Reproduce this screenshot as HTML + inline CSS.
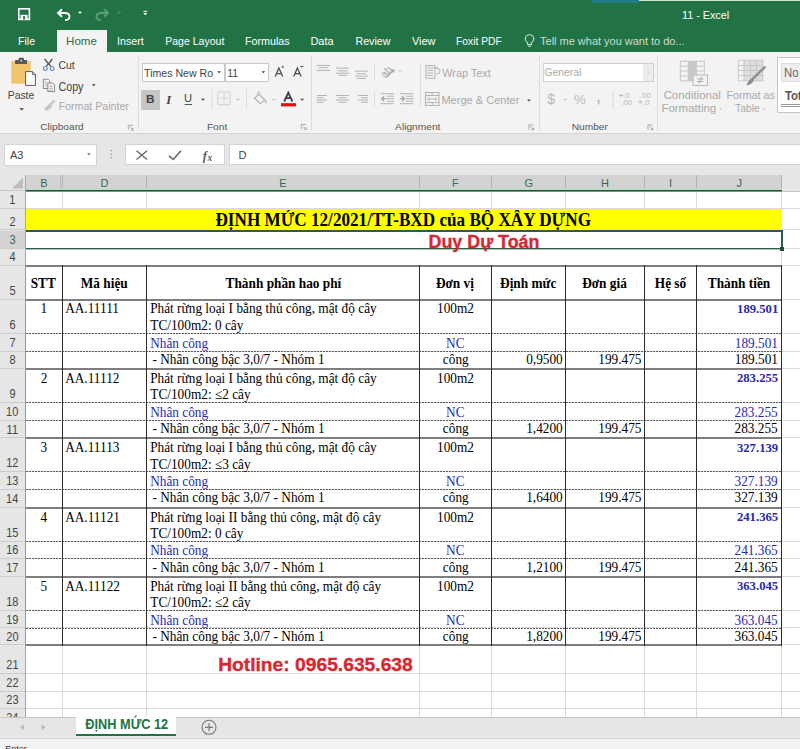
<!DOCTYPE html>
<html><head><meta charset="utf-8"><title>Excel</title>
<style>html,body{margin:0;padding:0;} body{width:800px;height:749px;overflow:hidden;position:relative;background:#fff;font-family:'Liberation Sans',sans-serif;}</style>
</head><body>
<div style="position:absolute;left:0px;top:0px;width:800px;height:52px;background:#217346"></div>
<div style="position:absolute;left:592px;top:0px;width:47px;height:3px;background:linear-gradient(#1f7a96,#2a7a70)"></div>
<div style="position:absolute;left:639px;top:0px;width:161px;height:1px;background:#cfe3d6"></div>
<div style="left:681.94px;position:absolute;top:10px;font-family:'Liberation Sans',sans-serif;font-size:10.8px;line-height:1;font-weight:400;color:#fff;white-space:pre;">11 - Excel</div>
<div style="position:absolute;left:57px;top:30px;width:50px;height:22px;background:#f3f3f3"></div>
<div style="left:18.05px;position:absolute;top:36px;font-family:'Liberation Sans',sans-serif;font-size:10.6px;line-height:1;font-weight:400;color:#fff;white-space:pre;">File</div>
<div style="left:66.07px;position:absolute;top:36px;font-family:'Liberation Sans',sans-serif;font-size:11.57px;line-height:1;font-weight:400;color:#35684b;white-space:pre;">Home</div>
<div style="left:117.04px;position:absolute;top:36px;font-family:'Liberation Sans',sans-serif;font-size:10.71px;line-height:1;font-weight:400;color:#fff;white-space:pre;">Insert</div>
<div style="left:165.26px;position:absolute;top:36px;font-family:'Liberation Sans',sans-serif;font-size:10.52px;line-height:1;font-weight:400;color:#fff;white-space:pre;">Page Layout</div>
<div style="left:245.04px;position:absolute;top:36px;font-family:'Liberation Sans',sans-serif;font-size:10.69px;line-height:1;font-weight:400;color:#fff;white-space:pre;">Formulas</div>
<div style="left:310.42px;position:absolute;top:36px;font-family:'Liberation Sans',sans-serif;font-size:10.98px;line-height:1;font-weight:400;color:#fff;white-space:pre;">Data</div>
<div style="left:355.45px;position:absolute;top:36px;font-family:'Liberation Sans',sans-serif;font-size:10.66px;line-height:1;font-weight:400;color:#fff;white-space:pre;">Review</div>
<div style="left:411.89px;position:absolute;top:36px;font-family:'Liberation Sans',sans-serif;font-size:10.93px;line-height:1;font-weight:400;color:#fff;white-space:pre;">View</div>
<div style="left:456.08px;position:absolute;top:37px;font-family:'Liberation Sans',sans-serif;font-size:10.28px;line-height:1;font-weight:400;color:#fff;white-space:pre;">Foxit PDF</div>
<div style="left:540.08px;position:absolute;top:36px;font-family:'Liberation Sans',sans-serif;font-size:10.98px;line-height:1;font-weight:400;color:#c9dfd0;white-space:pre;">Tell me what you want to do...</div>
<div style="position:absolute;left:0px;top:52px;width:800px;height:82px;background:#f3f3f3"></div>
<div style="position:absolute;left:0px;top:133px;width:800px;height:1px;background:#d5d5d5"></div>
<div style="position:absolute;left:138px;top:55px;width:1px;height:75px;background:#dcdcdc"></div>
<div style="position:absolute;left:310.5px;top:55px;width:1px;height:75px;background:#dcdcdc"></div>
<div style="position:absolute;left:538.5px;top:55px;width:1px;height:75px;background:#dcdcdc"></div>
<div style="position:absolute;left:656.5px;top:55px;width:1px;height:75px;background:#dcdcdc"></div>
<div style="left:7.73px;position:absolute;top:91px;font-family:'Liberation Sans',sans-serif;font-size:10.4px;line-height:1;font-weight:400;color:#444;white-space:pre;transform:scaleY(1.08);transform-origin:0 8px;">Paste</div>
<div style="left:58.48px;position:absolute;top:61px;font-family:'Liberation Sans',sans-serif;font-size:10.47px;line-height:1;font-weight:400;color:#444;white-space:pre;transform:scaleY(1.12);transform-origin:0 8px;">Cut</div>
<div style="left:58.47px;position:absolute;top:82px;font-family:'Liberation Sans',sans-serif;font-size:10.7px;line-height:1;font-weight:400;color:#444;white-space:pre;transform:scaleY(1.12);transform-origin:0 9px;">Copy</div>
<div style="left:58.65px;position:absolute;top:101px;font-family:'Liberation Sans',sans-serif;font-size:10.64px;line-height:1;font-weight:400;color:#a9a9a9;white-space:pre;">Format Painter</div>
<div style="left:40.17px;position:absolute;top:122px;font-family:'Liberation Sans',sans-serif;font-size:10.2px;line-height:1;font-weight:400;color:#555;white-space:pre;transform:scaleY(0.96);transform-origin:0 8px;">Clipboard</div>
<div style="position:absolute;left:141.5px;top:63px;width:83px;height:19px;background:#fff;border:1px solid #c8c8c8;box-sizing:border-box"></div>
<div style="position:absolute;left:224.5px;top:63px;width:44px;height:19px;background:#fff;border:1px solid #c8c8c8;box-sizing:border-box"></div>
<div style="left:144.09px;position:absolute;top:68px;font-family:'Liberation Sans',sans-serif;font-size:10.6px;line-height:1;font-weight:400;color:#444;white-space:pre;">Times New Ro</div>
<div style="left:227.26px;position:absolute;top:68px;font-family:'Liberation Sans',sans-serif;font-size:10.55px;line-height:1;font-weight:400;color:#444;white-space:pre;">11</div>
<div style="position:absolute;left:141.3px;top:90px;width:18.7px;height:19.5px;background:#c6c6c6"></div>
<div style="left:206.89px;position:absolute;top:122px;font-family:'Liberation Sans',sans-serif;font-size:10.2px;line-height:1;font-weight:400;color:#555;white-space:pre;transform:scaleY(0.96);transform-origin:0 8px;">Font</div>
<div style="left:442.19px;position:absolute;top:68px;font-family:'Liberation Sans',sans-serif;font-size:10.88px;line-height:1;font-weight:400;color:#a9a9a9;white-space:pre;">Wrap Text</div>
<div style="left:441.42px;position:absolute;top:95px;font-family:'Liberation Sans',sans-serif;font-size:11.06px;line-height:1;font-weight:400;color:#a9a9a9;white-space:pre;">Merge &amp; Center</div>
<div style="left:395.11px;position:absolute;top:122px;font-family:'Liberation Sans',sans-serif;font-size:10.2px;line-height:1;font-weight:400;color:#555;white-space:pre;transform:scaleY(0.96);transform-origin:0 8px;">Alignment</div>
<div style="position:absolute;left:542.5px;top:63px;width:111.5px;height:19px;background:#fff;border:1px solid #d0d0d0;box-sizing:border-box"></div>
<div style="position:absolute;left:643px;top:64px;width:10px;height:17px;background:#ececec"></div>
<div style="left:544.38px;position:absolute;top:68px;font-family:'Liberation Sans',sans-serif;font-size:10.38px;line-height:1;font-weight:400;color:#a9a9a9;white-space:pre;">General</div>
<div style="left:571.69px;position:absolute;top:122px;font-family:'Liberation Sans',sans-serif;font-size:10.2px;line-height:1;font-weight:400;color:#555;white-space:pre;transform:scaleY(0.96);transform-origin:0 8px;">Number</div>
<div style="left:663.63px;position:absolute;top:90px;font-family:'Liberation Sans',sans-serif;font-size:11.43px;line-height:1;font-weight:400;color:#a9a9a9;white-space:pre;">Conditional</div>
<div style="left:661.38px;position:absolute;top:103px;font-family:'Liberation Sans',sans-serif;font-size:11.47px;line-height:1;font-weight:400;color:#a9a9a9;white-space:pre;">Formatting</div>
<div style="left:726.44px;position:absolute;top:90px;font-family:'Liberation Sans',sans-serif;font-size:10.75px;line-height:1;font-weight:400;color:#a9a9a9;white-space:pre;">Format as</div>
<div style="left:735.09px;position:absolute;top:104px;font-family:'Liberation Sans',sans-serif;font-size:10.3px;line-height:1;font-weight:400;color:#a9a9a9;white-space:pre;">Table</div>
<div style="position:absolute;left:777px;top:56.5px;width:30px;height:56px;background:#fff;border:1px solid #c6c6c6;box-sizing:border-box"></div>
<div style="position:absolute;left:780.5px;top:62.5px;width:25px;height:19px;background:#efeded;border:1px solid #dedede;box-sizing:border-box"></div>
<div style="left:784.10px;position:absolute;top:68px;font-family:'Liberation Sans',sans-serif;font-size:11.3px;line-height:1;font-weight:400;color:#666;white-space:pre;transform:scaleY(1.12);transform-origin:0 9px;">No</div>
<div style="left:784.89px;position:absolute;top:91px;font-family:'Liberation Sans',sans-serif;font-size:11.3px;line-height:1;font-weight:700;color:#555;white-space:pre;transform:scaleY(1.12);transform-origin:0 9px;">Tot</div>
<div style="position:absolute;left:780.5px;top:103.5px;width:25px;height:1px;background:#9a9a9a"></div>
<div style="position:absolute;left:780.5px;top:105.5px;width:25px;height:1px;background:#9a9a9a"></div>
<div style="position:absolute;left:0px;top:134px;width:800px;height:41px;background:#e6e6e6"></div>
<div style="position:absolute;left:4px;top:143.5px;width:93px;height:22px;background:#fff;box-sizing:border-box;border:1px solid #d4d4d4"></div>
<div style="left:9.90px;position:absolute;top:150px;font-family:'Liberation Sans',sans-serif;font-size:11.02px;line-height:1;font-weight:400;color:#444;white-space:pre;">A3</div>
<div style="position:absolute;left:125px;top:144px;width:100px;height:21px;background:#fff;box-sizing:border-box;border:1px solid #d4d4d4"></div>
<div style="position:absolute;left:229px;top:144px;width:571px;height:21px;background:#fff;box-sizing:border-box;border:1px solid #d4d4d4;border-right:none"></div>
<div style="left:238.42px;position:absolute;top:150px;font-family:'Liberation Sans',sans-serif;font-size:11px;line-height:1;font-weight:400;color:#444;white-space:pre;">D</div>
<div style="position:absolute;left:26px;top:191px;width:774px;height:526px;background:#fff"></div>
<div style="position:absolute;left:0px;top:175px;width:800px;height:16px;background:#e6e6e6"></div>
<div style="position:absolute;left:26px;top:175px;width:756px;height:16px;background:#d3d3d3"></div>
<div style="position:absolute;left:0px;top:191px;width:25px;height:526px;background:#e6e6e6"></div>
<div style="position:absolute;left:0px;top:190px;width:25px;height:1px;background:#c8c8c8"></div>
<div style="position:absolute;left:62px;top:191px;width:1px;height:17px;background:#dadada"></div>
<div style="position:absolute;left:62px;top:265px;width:1px;height:452px;background:#dadada"></div>
<div style="position:absolute;left:146px;top:191px;width:1px;height:17px;background:#dadada"></div>
<div style="position:absolute;left:146px;top:265px;width:1px;height:452px;background:#dadada"></div>
<div style="position:absolute;left:419px;top:191px;width:1px;height:17px;background:#dadada"></div>
<div style="position:absolute;left:419px;top:265px;width:1px;height:452px;background:#dadada"></div>
<div style="position:absolute;left:491px;top:191px;width:1px;height:17px;background:#dadada"></div>
<div style="position:absolute;left:491px;top:265px;width:1px;height:452px;background:#dadada"></div>
<div style="position:absolute;left:565px;top:191px;width:1px;height:17px;background:#dadada"></div>
<div style="position:absolute;left:565px;top:265px;width:1px;height:452px;background:#dadada"></div>
<div style="position:absolute;left:644px;top:191px;width:1px;height:17px;background:#dadada"></div>
<div style="position:absolute;left:644px;top:265px;width:1px;height:452px;background:#dadada"></div>
<div style="position:absolute;left:696px;top:191px;width:1px;height:17px;background:#dadada"></div>
<div style="position:absolute;left:696px;top:265px;width:1px;height:452px;background:#dadada"></div>
<div style="position:absolute;left:781px;top:191px;width:1px;height:17px;background:#dadada"></div>
<div style="position:absolute;left:781px;top:265px;width:1px;height:452px;background:#dadada"></div>
<div style="position:absolute;left:781px;top:191px;width:1px;height:526px;background:#dadada"></div>
<div style="position:absolute;left:782px;top:191px;width:0px;height:0px;"></div>
<div style="position:absolute;left:26px;top:208px;width:774px;height:1px;background:#dadada"></div>
<div style="position:absolute;left:0px;top:208px;width:25px;height:1px;background:#cdcdcd"></div>
<div style="position:absolute;left:26px;top:229px;width:774px;height:1px;background:#dadada"></div>
<div style="position:absolute;left:0px;top:229px;width:25px;height:1px;background:#cdcdcd"></div>
<div style="position:absolute;left:26px;top:248px;width:774px;height:1px;background:#dadada"></div>
<div style="position:absolute;left:0px;top:248px;width:25px;height:1px;background:#cdcdcd"></div>
<div style="position:absolute;left:26px;top:265px;width:774px;height:1px;background:#dadada"></div>
<div style="position:absolute;left:0px;top:265px;width:25px;height:1px;background:#cdcdcd"></div>
<div style="position:absolute;left:26px;top:299px;width:774px;height:1px;background:#dadada"></div>
<div style="position:absolute;left:0px;top:299px;width:25px;height:1px;background:#cdcdcd"></div>
<div style="position:absolute;left:26px;top:333px;width:774px;height:1px;background:#dadada"></div>
<div style="position:absolute;left:0px;top:333px;width:25px;height:1px;background:#cdcdcd"></div>
<div style="position:absolute;left:26px;top:351px;width:774px;height:1px;background:#dadada"></div>
<div style="position:absolute;left:0px;top:351px;width:25px;height:1px;background:#cdcdcd"></div>
<div style="position:absolute;left:26px;top:368px;width:774px;height:1px;background:#dadada"></div>
<div style="position:absolute;left:0px;top:368px;width:25px;height:1px;background:#cdcdcd"></div>
<div style="position:absolute;left:26px;top:402px;width:774px;height:1px;background:#dadada"></div>
<div style="position:absolute;left:0px;top:402px;width:25px;height:1px;background:#cdcdcd"></div>
<div style="position:absolute;left:26px;top:420px;width:774px;height:1px;background:#dadada"></div>
<div style="position:absolute;left:0px;top:420px;width:25px;height:1px;background:#cdcdcd"></div>
<div style="position:absolute;left:26px;top:437px;width:774px;height:1px;background:#dadada"></div>
<div style="position:absolute;left:0px;top:437px;width:25px;height:1px;background:#cdcdcd"></div>
<div style="position:absolute;left:26px;top:471px;width:774px;height:1px;background:#dadada"></div>
<div style="position:absolute;left:0px;top:471px;width:25px;height:1px;background:#cdcdcd"></div>
<div style="position:absolute;left:26px;top:489px;width:774px;height:1px;background:#dadada"></div>
<div style="position:absolute;left:0px;top:489px;width:25px;height:1px;background:#cdcdcd"></div>
<div style="position:absolute;left:26px;top:507px;width:774px;height:1px;background:#dadada"></div>
<div style="position:absolute;left:0px;top:507px;width:25px;height:1px;background:#cdcdcd"></div>
<div style="position:absolute;left:26px;top:541px;width:774px;height:1px;background:#dadada"></div>
<div style="position:absolute;left:0px;top:541px;width:25px;height:1px;background:#cdcdcd"></div>
<div style="position:absolute;left:26px;top:558px;width:774px;height:1px;background:#dadada"></div>
<div style="position:absolute;left:0px;top:558px;width:25px;height:1px;background:#cdcdcd"></div>
<div style="position:absolute;left:26px;top:576px;width:774px;height:1px;background:#dadada"></div>
<div style="position:absolute;left:0px;top:576px;width:25px;height:1px;background:#cdcdcd"></div>
<div style="position:absolute;left:26px;top:610px;width:774px;height:1px;background:#dadada"></div>
<div style="position:absolute;left:0px;top:610px;width:25px;height:1px;background:#cdcdcd"></div>
<div style="position:absolute;left:26px;top:627px;width:774px;height:1px;background:#dadada"></div>
<div style="position:absolute;left:0px;top:627px;width:25px;height:1px;background:#cdcdcd"></div>
<div style="position:absolute;left:26px;top:644px;width:774px;height:1px;background:#dadada"></div>
<div style="position:absolute;left:0px;top:644px;width:25px;height:1px;background:#cdcdcd"></div>
<div style="position:absolute;left:26px;top:673px;width:774px;height:1px;background:#dadada"></div>
<div style="position:absolute;left:0px;top:673px;width:25px;height:1px;background:#cdcdcd"></div>
<div style="position:absolute;left:26px;top:691px;width:774px;height:1px;background:#dadada"></div>
<div style="position:absolute;left:0px;top:691px;width:25px;height:1px;background:#cdcdcd"></div>
<div style="position:absolute;left:26px;top:708px;width:774px;height:1px;background:#dadada"></div>
<div style="position:absolute;left:0px;top:708px;width:25px;height:1px;background:#cdcdcd"></div>
<div style="position:absolute;left:26px;top:726px;width:774px;height:1px;background:#dadada"></div>
<div style="position:absolute;left:0px;top:726px;width:25px;height:1px;background:#cdcdcd"></div>
<div style="position:absolute;left:25px;top:175px;width:1px;height:542px;background:#a6a6a6"></div>
<div style="position:absolute;left:62px;top:175px;width:1px;height:16px;background:#b4b4b4"></div>
<div style="left:40.20px;position:absolute;top:178px;font-family:'Liberation Sans',sans-serif;font-size:11px;line-height:1;font-weight:400;color:#3b6650;white-space:pre;">B</div>
<div style="position:absolute;left:146px;top:175px;width:1px;height:16px;background:#b4b4b4"></div>
<div style="left:100.38px;position:absolute;top:178px;font-family:'Liberation Sans',sans-serif;font-size:11px;line-height:1;font-weight:400;color:#3b6650;white-space:pre;">D</div>
<div style="position:absolute;left:419px;top:175px;width:1px;height:16px;background:#b4b4b4"></div>
<div style="left:279.15px;position:absolute;top:178px;font-family:'Liberation Sans',sans-serif;font-size:11px;line-height:1;font-weight:400;color:#3b6650;white-space:pre;">E</div>
<div style="position:absolute;left:491px;top:175px;width:1px;height:16px;background:#b4b4b4"></div>
<div style="left:451.93px;position:absolute;top:178px;font-family:'Liberation Sans',sans-serif;font-size:11px;line-height:1;font-weight:400;color:#3b6650;white-space:pre;">F</div>
<div style="position:absolute;left:565px;top:175px;width:1px;height:16px;background:#b4b4b4"></div>
<div style="left:524.38px;position:absolute;top:178px;font-family:'Liberation Sans',sans-serif;font-size:11px;line-height:1;font-weight:400;color:#3b6650;white-space:pre;">G</div>
<div style="position:absolute;left:644px;top:175px;width:1px;height:16px;background:#b4b4b4"></div>
<div style="left:601.04px;position:absolute;top:178px;font-family:'Liberation Sans',sans-serif;font-size:11px;line-height:1;font-weight:400;color:#3b6650;white-space:pre;">H</div>
<div style="position:absolute;left:696px;top:175px;width:1px;height:16px;background:#b4b4b4"></div>
<div style="left:668.96px;position:absolute;top:178px;font-family:'Liberation Sans',sans-serif;font-size:11px;line-height:1;font-weight:400;color:#3b6650;white-space:pre;">I</div>
<div style="position:absolute;left:781px;top:175px;width:1px;height:16px;background:#b4b4b4"></div>
<div style="left:736.52px;position:absolute;top:178px;font-family:'Liberation Sans',sans-serif;font-size:11px;line-height:1;font-weight:400;color:#3b6650;white-space:pre;">J</div>
<div style="position:absolute;left:60px;top:175px;width:1px;height:16px;background:#bdbdbd"></div>
<div style="position:absolute;left:782px;top:191px;width:18px;height:1px;background:#c6c6c6"></div>
<div style="position:absolute;left:26px;top:188px;width:756px;height:2px;background:#c4d9cc"></div>
<div style="position:absolute;left:26px;top:190px;width:756px;height:1px;background:#1f5537"></div>
<div style="position:absolute;left:26px;top:191px;width:756px;height:1px;background:#6f9a82"></div>
<div style="left:9.26px;position:absolute;top:195px;font-family:'Liberation Sans',sans-serif;font-size:11px;line-height:1;font-weight:400;color:#444;white-space:pre;transform:scaleY(1.08);transform-origin:0 9px;">1</div>
<div style="left:9.42px;position:absolute;top:217px;font-family:'Liberation Sans',sans-serif;font-size:11px;line-height:1;font-weight:400;color:#444;white-space:pre;transform:scaleY(1.08);transform-origin:0 9px;">2</div>
<div style="position:absolute;left:0px;top:230.5px;width:25px;height:17.5px;background:#d3d3d3"></div>
<div style="left:9.47px;position:absolute;top:235px;font-family:'Liberation Sans',sans-serif;font-size:11px;line-height:1;font-weight:400;color:#3b6650;white-space:pre;transform:scaleY(1.08);transform-origin:0 9px;">3</div>
<div style="left:9.47px;position:absolute;top:252px;font-family:'Liberation Sans',sans-serif;font-size:11px;line-height:1;font-weight:400;color:#444;white-space:pre;transform:scaleY(1.08);transform-origin:0 9px;">4</div>
<div style="left:9.47px;position:absolute;top:286px;font-family:'Liberation Sans',sans-serif;font-size:11px;line-height:1;font-weight:400;color:#444;white-space:pre;transform:scaleY(1.08);transform-origin:0 9px;">5</div>
<div style="left:9.42px;position:absolute;top:320px;font-family:'Liberation Sans',sans-serif;font-size:11px;line-height:1;font-weight:400;color:#444;white-space:pre;transform:scaleY(1.08);transform-origin:0 9px;">6</div>
<div style="left:9.42px;position:absolute;top:338px;font-family:'Liberation Sans',sans-serif;font-size:11px;line-height:1;font-weight:400;color:#444;white-space:pre;transform:scaleY(1.08);transform-origin:0 9px;">7</div>
<div style="left:9.47px;position:absolute;top:355px;font-family:'Liberation Sans',sans-serif;font-size:11px;line-height:1;font-weight:400;color:#444;white-space:pre;transform:scaleY(1.08);transform-origin:0 9px;">8</div>
<div style="left:9.42px;position:absolute;top:389px;font-family:'Liberation Sans',sans-serif;font-size:11px;line-height:1;font-weight:400;color:#444;white-space:pre;transform:scaleY(1.08);transform-origin:0 9px;">9</div>
<div style="left:6.12px;position:absolute;top:407px;font-family:'Liberation Sans',sans-serif;font-size:11px;line-height:1;font-weight:400;color:#444;white-space:pre;transform:scaleY(1.08);transform-origin:0 9px;">10</div>
<div style="left:6.61px;position:absolute;top:425px;font-family:'Liberation Sans',sans-serif;font-size:11px;line-height:1;font-weight:400;color:#444;white-space:pre;transform:scaleY(1.08);transform-origin:0 9px;">11</div>
<div style="left:6.17px;position:absolute;top:458px;font-family:'Liberation Sans',sans-serif;font-size:11px;line-height:1;font-weight:400;color:#444;white-space:pre;transform:scaleY(1.08);transform-origin:0 9px;">12</div>
<div style="left:6.17px;position:absolute;top:476px;font-family:'Liberation Sans',sans-serif;font-size:11px;line-height:1;font-weight:400;color:#444;white-space:pre;transform:scaleY(1.08);transform-origin:0 9px;">13</div>
<div style="left:6.06px;position:absolute;top:494px;font-family:'Liberation Sans',sans-serif;font-size:11px;line-height:1;font-weight:400;color:#444;white-space:pre;transform:scaleY(1.08);transform-origin:0 9px;">14</div>
<div style="left:6.17px;position:absolute;top:528px;font-family:'Liberation Sans',sans-serif;font-size:11px;line-height:1;font-weight:400;color:#444;white-space:pre;transform:scaleY(1.08);transform-origin:0 9px;">15</div>
<div style="left:6.17px;position:absolute;top:545px;font-family:'Liberation Sans',sans-serif;font-size:11px;line-height:1;font-weight:400;color:#444;white-space:pre;transform:scaleY(1.08);transform-origin:0 9px;">16</div>
<div style="left:6.17px;position:absolute;top:563px;font-family:'Liberation Sans',sans-serif;font-size:11px;line-height:1;font-weight:400;color:#444;white-space:pre;transform:scaleY(1.08);transform-origin:0 9px;">17</div>
<div style="left:6.17px;position:absolute;top:597px;font-family:'Liberation Sans',sans-serif;font-size:11px;line-height:1;font-weight:400;color:#444;white-space:pre;transform:scaleY(1.08);transform-origin:0 9px;">18</div>
<div style="left:6.17px;position:absolute;top:615px;font-family:'Liberation Sans',sans-serif;font-size:11px;line-height:1;font-weight:400;color:#444;white-space:pre;transform:scaleY(1.08);transform-origin:0 9px;">19</div>
<div style="left:6.28px;position:absolute;top:632px;font-family:'Liberation Sans',sans-serif;font-size:11px;line-height:1;font-weight:400;color:#444;white-space:pre;transform:scaleY(1.08);transform-origin:0 9px;">20</div>
<div style="left:6.34px;position:absolute;top:660px;font-family:'Liberation Sans',sans-serif;font-size:11px;line-height:1;font-weight:400;color:#444;white-space:pre;transform:scaleY(1.08);transform-origin:0 9px;">21</div>
<div style="left:6.34px;position:absolute;top:678px;font-family:'Liberation Sans',sans-serif;font-size:11px;line-height:1;font-weight:400;color:#444;white-space:pre;transform:scaleY(1.08);transform-origin:0 9px;">22</div>
<div style="left:6.34px;position:absolute;top:695px;font-family:'Liberation Sans',sans-serif;font-size:11px;line-height:1;font-weight:400;color:#444;white-space:pre;transform:scaleY(1.08);transform-origin:0 9px;">23</div>
<div style="left:6.23px;position:absolute;top:713px;font-family:'Liberation Sans',sans-serif;font-size:11px;line-height:1;font-weight:400;color:#444;white-space:pre;transform:scaleY(1.08);transform-origin:0 9px;">24</div>
<div style="position:absolute;left:26px;top:209px;width:756px;height:21px;background:#ffff00"></div>
<div style="left:215.46px;position:absolute;top:212px;font-family:'Liberation Serif',serif;font-size:17.15px;line-height:1;font-weight:700;color:#000;white-space:pre;transform:scaleY(1.05);transform-origin:0 14px;">ĐỊNH MỨC 12/2021/TT-BXD của BỘ XÂY DỰNG</div>
<div style="position:absolute;left:26px;top:229.5px;width:756px;height:2px;background:#2b5e44"></div>
<div style="position:absolute;left:26px;top:248px;width:756px;height:1px;background:#2b5e44"></div>
<div style="position:absolute;left:26px;top:249px;width:756px;height:1px;background:#a9c2b3"></div>
<div style="position:absolute;left:780.5px;top:229.5px;width:2px;height:20px;background:#2b5e44"></div>
<div style="position:absolute;left:779.5px;top:246.5px;width:4.5px;height:4.5px;background:#234f39"></div>
<div style="left:428.55px;position:absolute;top:234px;font-family:'Liberation Sans',sans-serif;font-size:17.89px;line-height:1;font-weight:700;color:#d52831;white-space:pre;-webkit-text-stroke:0.35px #d52831;">Duy Dự Toán</div>
<div style="position:absolute;left:25px;top:265px;width:1px;height:381px;background:#9a9a9a"></div>
<div style="position:absolute;left:62px;top:265px;width:1px;height:381px;background:#2c2c2c"></div>
<div style="position:absolute;left:146px;top:265px;width:1px;height:381px;background:#2c2c2c"></div>
<div style="position:absolute;left:419px;top:265px;width:1px;height:381px;background:#2c2c2c"></div>
<div style="position:absolute;left:491px;top:265px;width:1px;height:381px;background:#2c2c2c"></div>
<div style="position:absolute;left:565px;top:265px;width:1px;height:381px;background:#2c2c2c"></div>
<div style="position:absolute;left:644px;top:265px;width:1px;height:381px;background:#2c2c2c"></div>
<div style="position:absolute;left:696px;top:265px;width:1px;height:381px;background:#2c2c2c"></div>
<div style="position:absolute;left:781px;top:265px;width:1px;height:381px;background:#2c2c2c"></div>
<div style="position:absolute;left:26px;top:265px;width:756px;height:2px;background:#7e7e7e"></div>
<div style="position:absolute;left:26px;top:299px;width:756px;height:2px;background:#7e7e7e"></div>
<div style="position:absolute;left:26px;top:333px;width:756px;height:1px;background-image:linear-gradient(90deg,#5a5a5a 2px,transparent 2px);background-size:3px 1px"></div>
<div style="position:absolute;left:26px;top:351px;width:756px;height:1px;background-image:linear-gradient(90deg,#5a5a5a 2px,transparent 2px);background-size:3px 1px"></div>
<div style="position:absolute;left:26px;top:368px;width:756px;height:2px;background:#7e7e7e"></div>
<div style="position:absolute;left:26px;top:402px;width:756px;height:1px;background-image:linear-gradient(90deg,#5a5a5a 2px,transparent 2px);background-size:3px 1px"></div>
<div style="position:absolute;left:26px;top:420px;width:756px;height:1px;background-image:linear-gradient(90deg,#5a5a5a 2px,transparent 2px);background-size:3px 1px"></div>
<div style="position:absolute;left:26px;top:437px;width:756px;height:2px;background:#7e7e7e"></div>
<div style="position:absolute;left:26px;top:471px;width:756px;height:1px;background-image:linear-gradient(90deg,#5a5a5a 2px,transparent 2px);background-size:3px 1px"></div>
<div style="position:absolute;left:26px;top:489px;width:756px;height:1px;background-image:linear-gradient(90deg,#5a5a5a 2px,transparent 2px);background-size:3px 1px"></div>
<div style="position:absolute;left:26px;top:507px;width:756px;height:2px;background:#7e7e7e"></div>
<div style="position:absolute;left:26px;top:541px;width:756px;height:1px;background-image:linear-gradient(90deg,#5a5a5a 2px,transparent 2px);background-size:3px 1px"></div>
<div style="position:absolute;left:26px;top:558px;width:756px;height:1px;background-image:linear-gradient(90deg,#5a5a5a 2px,transparent 2px);background-size:3px 1px"></div>
<div style="position:absolute;left:26px;top:576px;width:756px;height:2px;background:#7e7e7e"></div>
<div style="position:absolute;left:26px;top:610px;width:756px;height:1px;background-image:linear-gradient(90deg,#5a5a5a 2px,transparent 2px);background-size:3px 1px"></div>
<div style="position:absolute;left:26px;top:628px;width:756px;height:1px;background-image:linear-gradient(90deg,#5a5a5a 2px,transparent 2px);background-size:3px 1px"></div>
<div style="position:absolute;left:26px;top:644px;width:756px;height:2px;background:#7e7e7e"></div>
<div style="position:absolute;left:62px;top:265px;width:1px;height:381px;background:#2c2c2c"></div>
<div style="position:absolute;left:146px;top:265px;width:1px;height:381px;background:#2c2c2c"></div>
<div style="position:absolute;left:419px;top:265px;width:1px;height:381px;background:#2c2c2c"></div>
<div style="position:absolute;left:491px;top:265px;width:1px;height:381px;background:#2c2c2c"></div>
<div style="position:absolute;left:565px;top:265px;width:1px;height:381px;background:#2c2c2c"></div>
<div style="position:absolute;left:644px;top:265px;width:1px;height:381px;background:#2c2c2c"></div>
<div style="position:absolute;left:696px;top:265px;width:1px;height:381px;background:#2c2c2c"></div>
<div style="position:absolute;left:781px;top:265px;width:1px;height:381px;background:#2c2c2c"></div>
<div style="left:30.73px;position:absolute;top:277px;font-family:'Liberation Serif',serif;font-size:13.3px;line-height:1;font-weight:700;color:#000;white-space:pre;transform:scaleY(1.05);transform-origin:0 11px;">STT</div>
<div style="left:80.79px;position:absolute;top:277px;font-family:'Liberation Serif',serif;font-size:13.3px;line-height:1;font-weight:700;color:#000;white-space:pre;transform:scaleY(1.05);transform-origin:0 11px;">Mã hiệu</div>
<div style="left:225.61px;position:absolute;top:277px;font-family:'Liberation Serif',serif;font-size:13.3px;line-height:1;font-weight:700;color:#000;white-space:pre;transform:scaleY(1.05);transform-origin:0 11px;">Thành phần hao phí</div>
<div style="left:435.88px;position:absolute;top:277px;font-family:'Liberation Serif',serif;font-size:13.3px;line-height:1;font-weight:700;color:#000;white-space:pre;transform:scaleY(1.05);transform-origin:0 11px;">Đơn vị</div>
<div style="left:500.05px;position:absolute;top:277px;font-family:'Liberation Serif',serif;font-size:13.3px;line-height:1;font-weight:700;color:#000;white-space:pre;transform:scaleY(1.05);transform-origin:0 11px;">Định mức</div>
<div style="left:582.14px;position:absolute;top:277px;font-family:'Liberation Serif',serif;font-size:13.3px;line-height:1;font-weight:700;color:#000;white-space:pre;transform:scaleY(1.05);transform-origin:0 11px;">Đơn giá</div>
<div style="left:654.81px;position:absolute;top:277px;font-family:'Liberation Serif',serif;font-size:13.3px;line-height:1;font-weight:700;color:#000;white-space:pre;transform:scaleY(1.05);transform-origin:0 11px;">Hệ số</div>
<div style="left:707.81px;position:absolute;top:277px;font-family:'Liberation Serif',serif;font-size:13.3px;line-height:1;font-weight:700;color:#000;white-space:pre;transform:scaleY(1.05);transform-origin:0 11px;">Thành tiền</div>
<div style="left:40.48px;position:absolute;top:302px;font-family:'Liberation Serif',serif;font-size:13.3px;line-height:1;font-weight:400;color:#000;white-space:pre;transform:scaleY(1.05);transform-origin:0 11px;">1</div>
<div style="left:65.17px;position:absolute;top:302px;font-family:'Liberation Serif',serif;font-size:13.3px;line-height:1;font-weight:400;color:#000;white-space:pre;transform:scaleY(1.05);transform-origin:0 11px;">AA.11111</div>
<div style="left:150.15px;position:absolute;top:302px;font-family:'Liberation Serif',serif;font-size:13.3px;line-height:1;font-weight:400;color:#000;white-space:pre;transform:scaleY(1.05);transform-origin:0 11px;">Phát rừng loại I bằng thủ công, mật độ cây</div>
<div style="left:150.28px;position:absolute;top:319px;font-family:'Liberation Serif',serif;font-size:13.3px;line-height:1;font-weight:400;color:#000;white-space:pre;transform:scaleY(1.05);transform-origin:0 11px;">TC/100m2: 0 cây</div>
<div style="left:437.00px;position:absolute;top:302px;font-family:'Liberation Serif',serif;font-size:13.3px;line-height:1;font-weight:400;color:#000;white-space:pre;transform:scaleY(1.05);transform-origin:0 11px;">100m2</div>
<div style="left:737.06px;position:absolute;top:303px;font-family:'Liberation Serif',serif;font-size:12.7px;line-height:1;font-weight:700;color:#2a2aae;white-space:pre;">189.501</div>
<div style="left:150.15px;position:absolute;top:337px;font-family:'Liberation Serif',serif;font-size:13.3px;line-height:1;font-weight:400;color:#2a2aae;white-space:pre;transform:scaleY(1.05);transform-origin:0 11px;">Nhân công</div>
<div style="left:446.06px;position:absolute;top:337px;font-family:'Liberation Serif',serif;font-size:13.3px;line-height:1;font-weight:400;color:#2a2aae;white-space:pre;transform:scaleY(1.05);transform-origin:0 11px;">NC</div>
<div style="left:734.77px;position:absolute;top:337px;font-family:'Liberation Serif',serif;font-size:13.3px;line-height:1;font-weight:400;color:#2a2aae;white-space:pre;transform:scaleY(1.05);transform-origin:0 11px;">189.501</div>
<div style="left:152.47px;position:absolute;top:353px;font-family:'Liberation Serif',serif;font-size:13.3px;line-height:1;font-weight:400;color:#000;white-space:pre;transform:scaleY(1.05);transform-origin:0 11px;">- Nhân công bậc 3,0/7 - Nhóm 1</div>
<div style="left:442.87px;position:absolute;top:353px;font-family:'Liberation Serif',serif;font-size:13.3px;line-height:1;font-weight:400;color:#000;white-space:pre;transform:scaleY(1.05);transform-origin:0 11px;">công</div>
<div style="left:526.16px;position:absolute;top:353px;font-family:'Liberation Serif',serif;font-size:13.3px;line-height:1;font-weight:400;color:#000;white-space:pre;transform:scaleY(1.05);transform-origin:0 11px;">0,9500</div>
<div style="left:598.26px;position:absolute;top:353px;font-family:'Liberation Serif',serif;font-size:13.3px;line-height:1;font-weight:400;color:#000;white-space:pre;transform:scaleY(1.05);transform-origin:0 11px;">199.475</div>
<div style="left:734.77px;position:absolute;top:353px;font-family:'Liberation Serif',serif;font-size:13.3px;line-height:1;font-weight:400;color:#000;white-space:pre;transform:scaleY(1.05);transform-origin:0 11px;">189.501</div>
<div style="left:40.74px;position:absolute;top:372px;font-family:'Liberation Serif',serif;font-size:13.3px;line-height:1;font-weight:400;color:#000;white-space:pre;transform:scaleY(1.05);transform-origin:0 11px;">2</div>
<div style="left:65.17px;position:absolute;top:372px;font-family:'Liberation Serif',serif;font-size:13.3px;line-height:1;font-weight:400;color:#000;white-space:pre;transform:scaleY(1.05);transform-origin:0 11px;">AA.11112</div>
<div style="left:150.15px;position:absolute;top:372px;font-family:'Liberation Serif',serif;font-size:13.3px;line-height:1;font-weight:400;color:#000;white-space:pre;transform:scaleY(1.05);transform-origin:0 11px;">Phát rừng loại I bằng thủ công, mật độ cây</div>
<div style="left:150.28px;position:absolute;top:388px;font-family:'Liberation Serif',serif;font-size:13.3px;line-height:1;font-weight:400;color:#000;white-space:pre;transform:scaleY(1.05);transform-origin:0 11px;">TC/100m2: ≤2 cây</div>
<div style="left:437.00px;position:absolute;top:372px;font-family:'Liberation Serif',serif;font-size:13.3px;line-height:1;font-weight:400;color:#000;white-space:pre;transform:scaleY(1.05);transform-origin:0 11px;">100m2</div>
<div style="left:736.93px;position:absolute;top:372px;font-family:'Liberation Serif',serif;font-size:12.7px;line-height:1;font-weight:700;color:#2a2aae;white-space:pre;">283.255</div>
<div style="left:150.15px;position:absolute;top:406px;font-family:'Liberation Serif',serif;font-size:13.3px;line-height:1;font-weight:400;color:#2a2aae;white-space:pre;transform:scaleY(1.05);transform-origin:0 11px;">Nhân công</div>
<div style="left:446.06px;position:absolute;top:406px;font-family:'Liberation Serif',serif;font-size:13.3px;line-height:1;font-weight:400;color:#2a2aae;white-space:pre;transform:scaleY(1.05);transform-origin:0 11px;">NC</div>
<div style="left:734.51px;position:absolute;top:406px;font-family:'Liberation Serif',serif;font-size:13.3px;line-height:1;font-weight:400;color:#2a2aae;white-space:pre;transform:scaleY(1.05);transform-origin:0 11px;">283.255</div>
<div style="left:152.47px;position:absolute;top:422px;font-family:'Liberation Serif',serif;font-size:13.3px;line-height:1;font-weight:400;color:#000;white-space:pre;transform:scaleY(1.05);transform-origin:0 11px;">- Nhân công bậc 3,0/7 - Nhóm 1</div>
<div style="left:442.87px;position:absolute;top:422px;font-family:'Liberation Serif',serif;font-size:13.3px;line-height:1;font-weight:400;color:#000;white-space:pre;transform:scaleY(1.05);transform-origin:0 11px;">công</div>
<div style="left:526.16px;position:absolute;top:422px;font-family:'Liberation Serif',serif;font-size:13.3px;line-height:1;font-weight:400;color:#000;white-space:pre;transform:scaleY(1.05);transform-origin:0 11px;">1,4200</div>
<div style="left:598.26px;position:absolute;top:422px;font-family:'Liberation Serif',serif;font-size:13.3px;line-height:1;font-weight:400;color:#000;white-space:pre;transform:scaleY(1.05);transform-origin:0 11px;">199.475</div>
<div style="left:734.51px;position:absolute;top:422px;font-family:'Liberation Serif',serif;font-size:13.3px;line-height:1;font-weight:400;color:#000;white-space:pre;transform:scaleY(1.05);transform-origin:0 11px;">283.255</div>
<div style="left:40.61px;position:absolute;top:441px;font-family:'Liberation Serif',serif;font-size:13.3px;line-height:1;font-weight:400;color:#000;white-space:pre;transform:scaleY(1.05);transform-origin:0 11px;">3</div>
<div style="left:65.17px;position:absolute;top:441px;font-family:'Liberation Serif',serif;font-size:13.3px;line-height:1;font-weight:400;color:#000;white-space:pre;transform:scaleY(1.05);transform-origin:0 11px;">AA.11113</div>
<div style="left:150.15px;position:absolute;top:441px;font-family:'Liberation Serif',serif;font-size:13.3px;line-height:1;font-weight:400;color:#000;white-space:pre;transform:scaleY(1.05);transform-origin:0 11px;">Phát rừng loại I bằng thủ công, mật độ cây</div>
<div style="left:150.28px;position:absolute;top:458px;font-family:'Liberation Serif',serif;font-size:13.3px;line-height:1;font-weight:400;color:#000;white-space:pre;transform:scaleY(1.05);transform-origin:0 11px;">TC/100m2: ≤3 cây</div>
<div style="left:437.00px;position:absolute;top:441px;font-family:'Liberation Serif',serif;font-size:13.3px;line-height:1;font-weight:400;color:#000;white-space:pre;transform:scaleY(1.05);transform-origin:0 11px;">100m2</div>
<div style="left:736.93px;position:absolute;top:442px;font-family:'Liberation Serif',serif;font-size:12.7px;line-height:1;font-weight:700;color:#2a2aae;white-space:pre;">327.139</div>
<div style="left:150.15px;position:absolute;top:475px;font-family:'Liberation Serif',serif;font-size:13.3px;line-height:1;font-weight:400;color:#2a2aae;white-space:pre;transform:scaleY(1.05);transform-origin:0 11px;">Nhân công</div>
<div style="left:446.06px;position:absolute;top:475px;font-family:'Liberation Serif',serif;font-size:13.3px;line-height:1;font-weight:400;color:#2a2aae;white-space:pre;transform:scaleY(1.05);transform-origin:0 11px;">NC</div>
<div style="left:734.51px;position:absolute;top:475px;font-family:'Liberation Serif',serif;font-size:13.3px;line-height:1;font-weight:400;color:#2a2aae;white-space:pre;transform:scaleY(1.05);transform-origin:0 11px;">327.139</div>
<div style="left:152.47px;position:absolute;top:491px;font-family:'Liberation Serif',serif;font-size:13.3px;line-height:1;font-weight:400;color:#000;white-space:pre;transform:scaleY(1.05);transform-origin:0 11px;">- Nhân công bậc 3,0/7 - Nhóm 1</div>
<div style="left:442.87px;position:absolute;top:491px;font-family:'Liberation Serif',serif;font-size:13.3px;line-height:1;font-weight:400;color:#000;white-space:pre;transform:scaleY(1.05);transform-origin:0 11px;">công</div>
<div style="left:526.16px;position:absolute;top:491px;font-family:'Liberation Serif',serif;font-size:13.3px;line-height:1;font-weight:400;color:#000;white-space:pre;transform:scaleY(1.05);transform-origin:0 11px;">1,6400</div>
<div style="left:598.26px;position:absolute;top:491px;font-family:'Liberation Serif',serif;font-size:13.3px;line-height:1;font-weight:400;color:#000;white-space:pre;transform:scaleY(1.05);transform-origin:0 11px;">199.475</div>
<div style="left:734.51px;position:absolute;top:491px;font-family:'Liberation Serif',serif;font-size:13.3px;line-height:1;font-weight:400;color:#000;white-space:pre;transform:scaleY(1.05);transform-origin:0 11px;">327.139</div>
<div style="left:40.61px;position:absolute;top:511px;font-family:'Liberation Serif',serif;font-size:13.3px;line-height:1;font-weight:400;color:#000;white-space:pre;transform:scaleY(1.05);transform-origin:0 11px;">4</div>
<div style="left:65.17px;position:absolute;top:511px;font-family:'Liberation Serif',serif;font-size:13.3px;line-height:1;font-weight:400;color:#000;white-space:pre;transform:scaleY(1.05);transform-origin:0 11px;">AA.11121</div>
<div style="left:150.15px;position:absolute;top:511px;font-family:'Liberation Serif',serif;font-size:13.3px;line-height:1;font-weight:400;color:#000;white-space:pre;transform:scaleY(1.05);transform-origin:0 11px;">Phát rừng loại II bằng thủ công, mật độ cây</div>
<div style="left:150.28px;position:absolute;top:527px;font-family:'Liberation Serif',serif;font-size:13.3px;line-height:1;font-weight:400;color:#000;white-space:pre;transform:scaleY(1.05);transform-origin:0 11px;">TC/100m2: 0 cây</div>
<div style="left:437.00px;position:absolute;top:511px;font-family:'Liberation Serif',serif;font-size:13.3px;line-height:1;font-weight:400;color:#000;white-space:pre;transform:scaleY(1.05);transform-origin:0 11px;">100m2</div>
<div style="left:736.93px;position:absolute;top:511px;font-family:'Liberation Serif',serif;font-size:12.7px;line-height:1;font-weight:700;color:#2a2aae;white-space:pre;">241.365</div>
<div style="left:150.15px;position:absolute;top:544px;font-family:'Liberation Serif',serif;font-size:13.3px;line-height:1;font-weight:400;color:#2a2aae;white-space:pre;transform:scaleY(1.05);transform-origin:0 11px;">Nhân công</div>
<div style="left:446.06px;position:absolute;top:544px;font-family:'Liberation Serif',serif;font-size:13.3px;line-height:1;font-weight:400;color:#2a2aae;white-space:pre;transform:scaleY(1.05);transform-origin:0 11px;">NC</div>
<div style="left:734.51px;position:absolute;top:544px;font-family:'Liberation Serif',serif;font-size:13.3px;line-height:1;font-weight:400;color:#2a2aae;white-space:pre;transform:scaleY(1.05);transform-origin:0 11px;">241.365</div>
<div style="left:152.47px;position:absolute;top:561px;font-family:'Liberation Serif',serif;font-size:13.3px;line-height:1;font-weight:400;color:#000;white-space:pre;transform:scaleY(1.05);transform-origin:0 11px;">- Nhân công bậc 3,0/7 - Nhóm 1</div>
<div style="left:442.87px;position:absolute;top:561px;font-family:'Liberation Serif',serif;font-size:13.3px;line-height:1;font-weight:400;color:#000;white-space:pre;transform:scaleY(1.05);transform-origin:0 11px;">công</div>
<div style="left:526.16px;position:absolute;top:561px;font-family:'Liberation Serif',serif;font-size:13.3px;line-height:1;font-weight:400;color:#000;white-space:pre;transform:scaleY(1.05);transform-origin:0 11px;">1,2100</div>
<div style="left:598.26px;position:absolute;top:561px;font-family:'Liberation Serif',serif;font-size:13.3px;line-height:1;font-weight:400;color:#000;white-space:pre;transform:scaleY(1.05);transform-origin:0 11px;">199.475</div>
<div style="left:734.51px;position:absolute;top:561px;font-family:'Liberation Serif',serif;font-size:13.3px;line-height:1;font-weight:400;color:#000;white-space:pre;transform:scaleY(1.05);transform-origin:0 11px;">241.365</div>
<div style="left:40.54px;position:absolute;top:580px;font-family:'Liberation Serif',serif;font-size:13.3px;line-height:1;font-weight:400;color:#000;white-space:pre;transform:scaleY(1.05);transform-origin:0 11px;">5</div>
<div style="left:65.17px;position:absolute;top:580px;font-family:'Liberation Serif',serif;font-size:13.3px;line-height:1;font-weight:400;color:#000;white-space:pre;transform:scaleY(1.05);transform-origin:0 11px;">AA.11122</div>
<div style="left:150.15px;position:absolute;top:580px;font-family:'Liberation Serif',serif;font-size:13.3px;line-height:1;font-weight:400;color:#000;white-space:pre;transform:scaleY(1.05);transform-origin:0 11px;">Phát rừng loại II bằng thủ công, mật độ cây</div>
<div style="left:150.28px;position:absolute;top:596px;font-family:'Liberation Serif',serif;font-size:13.3px;line-height:1;font-weight:400;color:#000;white-space:pre;transform:scaleY(1.05);transform-origin:0 11px;">TC/100m2: ≤2 cây</div>
<div style="left:437.00px;position:absolute;top:580px;font-family:'Liberation Serif',serif;font-size:13.3px;line-height:1;font-weight:400;color:#000;white-space:pre;transform:scaleY(1.05);transform-origin:0 11px;">100m2</div>
<div style="left:736.93px;position:absolute;top:580px;font-family:'Liberation Serif',serif;font-size:12.7px;line-height:1;font-weight:700;color:#2a2aae;white-space:pre;">363.045</div>
<div style="left:150.15px;position:absolute;top:614px;font-family:'Liberation Serif',serif;font-size:13.3px;line-height:1;font-weight:400;color:#2a2aae;white-space:pre;transform:scaleY(1.05);transform-origin:0 11px;">Nhân công</div>
<div style="left:446.06px;position:absolute;top:614px;font-family:'Liberation Serif',serif;font-size:13.3px;line-height:1;font-weight:400;color:#2a2aae;white-space:pre;transform:scaleY(1.05);transform-origin:0 11px;">NC</div>
<div style="left:734.51px;position:absolute;top:614px;font-family:'Liberation Serif',serif;font-size:13.3px;line-height:1;font-weight:400;color:#2a2aae;white-space:pre;transform:scaleY(1.05);transform-origin:0 11px;">363.045</div>
<div style="left:152.47px;position:absolute;top:630px;font-family:'Liberation Serif',serif;font-size:13.3px;line-height:1;font-weight:400;color:#000;white-space:pre;transform:scaleY(1.05);transform-origin:0 11px;">- Nhân công bậc 3,0/7 - Nhóm 1</div>
<div style="left:442.87px;position:absolute;top:630px;font-family:'Liberation Serif',serif;font-size:13.3px;line-height:1;font-weight:400;color:#000;white-space:pre;transform:scaleY(1.05);transform-origin:0 11px;">công</div>
<div style="left:526.16px;position:absolute;top:630px;font-family:'Liberation Serif',serif;font-size:13.3px;line-height:1;font-weight:400;color:#000;white-space:pre;transform:scaleY(1.05);transform-origin:0 11px;">1,8200</div>
<div style="left:598.26px;position:absolute;top:630px;font-family:'Liberation Serif',serif;font-size:13.3px;line-height:1;font-weight:400;color:#000;white-space:pre;transform:scaleY(1.05);transform-origin:0 11px;">199.475</div>
<div style="left:734.51px;position:absolute;top:630px;font-family:'Liberation Serif',serif;font-size:13.3px;line-height:1;font-weight:400;color:#000;white-space:pre;transform:scaleY(1.05);transform-origin:0 11px;">363.045</div>
<div style="left:218.15px;position:absolute;top:655px;font-family:'Liberation Sans',sans-serif;font-size:19.24px;line-height:1;font-weight:700;color:#d52831;white-space:pre;-webkit-text-stroke:0.35px #d52831;">Hotline: 0965.635.638</div>
<div style="position:absolute;left:0px;top:717px;width:800px;height:21px;background:#e6e6e6;border-top:1px solid #c6c6c6;box-sizing:border-box"></div>
<div style="position:absolute;left:76px;top:717px;width:100px;height:19px;background:#fff"></div>
<div style="position:absolute;left:76px;top:734px;width:100px;height:2px;background:#217346"></div>
<div style="left:85.30px;position:absolute;top:719px;font-family:'Liberation Sans',sans-serif;font-size:12.76px;line-height:1;font-weight:700;color:#217346;white-space:pre;transform:scaleY(1.12);transform-origin:0 10px;">ĐỊNH MỨC 12</div>
<div style="position:absolute;left:0px;top:738px;width:800px;height:11px;background:#f3f3f3;border-top:1px solid #d4d4d4;box-sizing:border-box"></div>
<div style="left:5.18px;position:absolute;top:745px;font-family:'Liberation Sans',sans-serif;font-size:9.04px;line-height:1;font-weight:400;color:#333;white-space:pre;">Enter</div>
<div style="left:145.97px;position:absolute;top:94px;font-family:'Liberation Sans',sans-serif;font-size:11.8px;line-height:1;font-weight:700;color:#444;white-space:pre;">B</div>
<div style="left:184.00px;position:absolute;top:93px;font-family:'Liberation Sans',sans-serif;font-size:11.2px;line-height:1;font-weight:400;color:#444;white-space:pre;">U</div>
<div style="left:547.36px;position:absolute;top:92px;font-family:'Liberation Sans',sans-serif;font-size:14px;line-height:1;font-weight:400;color:#b8b8b8;white-space:pre;">$</div>
<div style="left:573.97px;position:absolute;top:93px;font-family:'Liberation Sans',sans-serif;font-size:13.2px;line-height:1;font-weight:400;color:#b8b8b8;white-space:pre;">%</div>
<div style="left:596.62px;position:absolute;top:90px;font-family:'Liberation Sans',sans-serif;font-size:14px;line-height:1;font-weight:700;color:#b8b8b8;white-space:pre;">,</div>
<svg style="position:absolute;left:0;top:0" width="800" height="749" viewBox="0 0 800 749"><rect x="18.8" y="8.8" width="10.6" height="10.6" fill="none" stroke="#fff" stroke-width="1.6"/><rect x="20.6" y="14.8" width="7" height="4.6" fill="#fff"/><rect x="23.1" y="16.2" width="2" height="3.2" fill="#217346"/><path d="M58.5 13 H64.5 Q69.5 13 69.5 16.5 Q69.5 20 65 20" fill="none" stroke="#fff" stroke-width="1.9"/><path d="M62 9.3 L58 13 L62 16.7" fill="none" stroke="#fff" stroke-width="1.9"/><path d="M78 11.8 H82 L80 14 Z" fill="#fff"/><path d="M107.5 13 H101.5 Q96.5 13 96.5 16.5 Q96.5 20 101 20" fill="none" stroke="#5e9e78" stroke-width="1.9"/><path d="M104 9.3 L108 13 L104 16.7" fill="none" stroke="#5e9e78" stroke-width="1.9"/><path d="M117.3 11.8 H121.3 L119.3 14 Z" fill="#4f8f69"/><rect x="143.3" y="10.8" width="4" height="1" fill="#fff"/><path d="M143.3 13 H147.3 L145.3 15.2 Z" fill="#fff"/><path d="M527.6 44.5 V42.8 Q525.3 41.3 525.3 38.9 A4.2 4.2 0 0 1 533.7 38.9 Q533.7 41.3 531.4 42.8 V44.5 Z" fill="none" stroke="#c9dfd0" stroke-width="1.1"/><rect x="527.8" y="45.6" width="3.4" height="1.1" fill="#c9dfd0"/><rect x="11.3" y="61" width="19.4" height="22.6" fill="#f2c46c"/><rect x="15.1" y="60" width="11.9" height="4" fill="#595959"/><rect x="18.6" y="57.8" width="5.4" height="3" rx="1" fill="#595959"/><circle cx="21.3" cy="60.6" r="0.9" fill="#f3f3f3"/><path d="M25.6 71.6 H32.4 L35.4 74.6 V85.4 H25.6 Z" fill="#fff" stroke="#5a5a5a" stroke-width="1"/><path d="M32.4 71.6 V74.6 H35.4" fill="none" stroke="#5a5a5a" stroke-width="0.9"/><path d="M19.3 108.2 H24 L21.65 110.5 Z" fill="#444"/><path d="M44.6 58.8 Q47 62.5 51.2 66.6 M52.4 58.8 Q50 62.5 45.8 66.6" stroke="#4a4a4a" stroke-width="1.25" fill="none"/><circle cx="45.3" cy="68.5" r="1.95" fill="none" stroke="#6a8fc2" stroke-width="1.1"/><circle cx="52.1" cy="68.5" r="1.95" fill="none" stroke="#6a8fc2" stroke-width="1.1"/><path d="M43.3 79.3 H48.3 L49.8 80.8 V88.5 H43.3 Z" fill="#f3f3f3" stroke="#777" stroke-width="0.85"/><path d="M44.6 81.8 H47.2 M44.6 83.8 H47.2 M44.6 85.8 H47.2" stroke="#a0a0a0" stroke-width="0.7"/><path d="M47.8 83 H52.6 L54.6 85 V91.6 H47.8 Z" fill="#f3f3f3" stroke="#777" stroke-width="0.85"/><path d="M49.2 86.3 H53 M49.2 88.3 H53 M49.2 90.3 H53" stroke="#a0a0a0" stroke-width="0.7"/><path d="M91.8 84.2 H95.6 L93.7 86.2 Z" fill="#444"/><path d="M44 109 L49.5 103.5 L52.5 106.5 L47 111 Z" fill="#c4c4c4"/><path d="M50.5 104.5 L54.5 100.5" stroke="#c4c4c4" stroke-width="2.2"/><path d="M128.3 129.8 V125.3 H132.8" fill="none" stroke="#a0a0a0" stroke-width="0.9"/><path d="M130.10000000000002 127.1 L133.10000000000002 130.1 M133.10000000000002 127.89999999999999 V130.1 H130.9" fill="none" stroke="#a0a0a0" stroke-width="0.9"/><path d="M301.3 129.0 V124.5 H305.8" fill="none" stroke="#a0a0a0" stroke-width="0.9"/><path d="M303.1 126.3 L306.1 129.3 M306.1 127.1 V129.3 H303.90000000000003" fill="none" stroke="#a0a0a0" stroke-width="0.9"/><path d="M528.8 129.5 V125 H533.3" fill="none" stroke="#a0a0a0" stroke-width="0.9"/><path d="M530.5999999999999 126.8 L533.5999999999999 129.8 M533.5999999999999 127.6 V129.8 H531.4" fill="none" stroke="#a0a0a0" stroke-width="0.9"/><path d="M648 129.5 V125 H652.5" fill="none" stroke="#a0a0a0" stroke-width="0.9"/><path d="M649.8 126.8 L652.8 129.8 M652.8 127.6 V129.8 H650.6" fill="none" stroke="#a0a0a0" stroke-width="0.9"/><path d="M217.2 71.3 H221 L219.1 73.3 Z" fill="#444"/><path d="M261.5 71.3 H265.3 L263.4 73.3 Z" fill="#444"/><path d="M275.1 76.6 L278.9 68 L282.7 76.6 M276.5 73.6 H281.3" fill="none" stroke="#4a4a4a" stroke-width="1.25"/><path d="M281.3 67.4 L282.8 65.6 L284.3 67.4 Z" fill="#4a4a4a"/><path d="M293.7 76.6 L297.4 68 L301.1 76.6 M295.1 73.6 H299.7" fill="none" stroke="#4a4a4a" stroke-width="1.25"/><path d="M300 65.9 L303.7 65.9 L301.85 67.8 Z" fill="#4a4a4a"/><path d="M201 98.8 H205 L203 100.8 Z" fill="#444"/><rect x="211.5" y="89" width="1" height="20" fill="#dcdcdc"/><rect x="246" y="89" width="1" height="20" fill="#dcdcdc"/><rect x="217.8" y="91.9" width="12.3" height="12.8" fill="none" stroke="#d2d2d2" stroke-width="1"/><path d="M224 92 V104.6 M217.8 98.3 H230" stroke="#d6d6d6" stroke-width="1"/><path d="M236 98.8 H240 L238 100.8 Z" fill="#c4c4c4"/><path d="M259 94.3 L264.8 99.8 L260.3 103.6 L254.5 98.2 Z" fill="none" stroke="#b4b4b4" stroke-width="1.2"/><path d="M257.8 95.5 V92.3 Q259.3 91 260.5 93.3" fill="none" stroke="#b4b4b4" stroke-width="1"/><path d="M265 99.8 Q266.8 101.6 265.8 103.2" fill="none" stroke="#b4b4b4" stroke-width="1.1"/><path d="M271.7 98.8 H275.7 L273.7 100.8 Z" fill="#cacaca"/><path d="M284.2 101.5 L288.3 92.6 L292.4 101.5 M285.8 98.2 H290.8" fill="none" stroke="#3c3c56" stroke-width="1.8"/><rect x="281" y="103.2" width="15" height="3.2" fill="#e01010"/><path d="M300.1 98.8 H304.1 L302.1 100.8 Z" fill="#444"/><text x="166.3" y="103.6" font-family="Liberation Serif" font-style="italic" font-weight="bold" font-size="12.6" fill="#444">I</text><rect x="184.6" y="104" width="7.4" height="1" fill="#555"/><rect x="316.7" y="64.9" width="13.5" height="1" fill="#b4b4b4"/><rect x="318.7" y="67.2" width="9.5" height="1" fill="#b4b4b4"/><rect x="316.7" y="69.9" width="13.5" height="1" fill="#b4b4b4"/><rect x="336" y="67.6" width="13" height="1" fill="#b4b4b4"/><rect x="337.5" y="70.3" width="10.0" height="1" fill="#b4b4b4"/><rect x="336" y="72.7" width="13" height="1" fill="#b4b4b4"/><rect x="338" y="74.8" width="9" height="1" fill="#b4b4b4"/><rect x="354.9" y="70.7" width="13" height="1" fill="#b4b4b4"/><rect x="356.4" y="73.3" width="10.0" height="1" fill="#b4b4b4"/><rect x="354.9" y="75.7" width="13" height="1" fill="#b4b4b4"/><rect x="356.9" y="78.0" width="9" height="1" fill="#b4b4b4"/><rect x="316.7" y="95.0" width="10" height="1" fill="#b4b4b4"/><rect x="316.7" y="97.3" width="7" height="1" fill="#b4b4b4"/><rect x="316.7" y="99.6" width="10" height="1" fill="#b4b4b4"/><rect x="316.7" y="101.8" width="7" height="1" fill="#b4b4b4"/><rect x="336" y="95.0" width="13" height="1" fill="#b4b4b4"/><rect x="338.5" y="97.3" width="8.0" height="1" fill="#b4b4b4"/><rect x="336" y="99.6" width="13" height="1" fill="#b4b4b4"/><rect x="338.5" y="101.8" width="8.0" height="1" fill="#b4b4b4"/><rect x="358" y="95.0" width="10" height="1" fill="#b4b4b4"/><rect x="361" y="97.3" width="7" height="1" fill="#b4b4b4"/><rect x="358" y="99.6" width="10" height="1" fill="#b4b4b4"/><rect x="361" y="101.8" width="7" height="1" fill="#b4b4b4"/><rect x="374" y="64" width="1" height="16" fill="#dcdcdc"/><rect x="374" y="91.5" width="1" height="15.5" fill="#dcdcdc"/><rect x="420" y="64" width="1" height="43" fill="#dcdcdc"/><text x="379.5" y="75.5" font-family="Liberation Sans" font-size="10.5" fill="#a9a9a9" transform="rotate(-45 385.5 71)">ab</text><path d="M386.3 77.6 L393 70.9" stroke="#a9a9a9" stroke-width="1.4"/><path d="M390.8 69.6 L394.6 69.2 L394.2 73 Z" fill="#a9a9a9"/><path d="M398 71 H401.5" stroke="#c8c8c8" stroke-width="1"/><rect x="380.5" y="93.2" width="13.5" height="1" fill="#b4b4b4"/><rect x="386.5" y="95.7" width="7.5" height="1" fill="#b4b4b4"/><rect x="386.5" y="98.2" width="7.5" height="1" fill="#b4b4b4"/><rect x="386.5" y="100.7" width="7.5" height="1" fill="#b4b4b4"/><rect x="380.5" y="103.2" width="13.5" height="1" fill="#b4b4b4"/><path d="M386 98.7 H381.5 M384 96.2 L381.5 98.7 L384 101.2" fill="none" stroke="#a8a8a8" stroke-width="1.3"/><rect x="400" y="93.2" width="13.5" height="1" fill="#b4b4b4"/><rect x="406" y="95.7" width="7.5" height="1" fill="#b4b4b4"/><rect x="406" y="98.2" width="7.5" height="1" fill="#b4b4b4"/><rect x="406" y="100.7" width="7.5" height="1" fill="#b4b4b4"/><rect x="400" y="103.2" width="13.5" height="1" fill="#b4b4b4"/><path d="M400 98.7 H404.5 M402 96.2 L404.5 98.7 L402 101.2" fill="none" stroke="#a8a8a8" stroke-width="1.3"/><path d="M426 65.5 H435 V78.3 H426 Z" fill="none" stroke="#b4b4b4" stroke-width="1"/><path d="M427.5 68 H438 M427.5 70.5 H433 M427.5 73 H433 M427.5 75.5 H433" stroke="#b4b4b4" stroke-width="1"/><path d="M436 68 Q440 68 440 71 Q440 74 436.5 74" fill="none" stroke="#b4b4b4" stroke-width="1"/><rect x="425.5" y="92.5" width="13.5" height="13" fill="none" stroke="#b4b4b4" stroke-width="1"/><path d="M425.5 95.5 H439 M425.5 102.5 H439 M432.2 92.5 V95.5 M432.2 102.5 V105.5" stroke="#b4b4b4" stroke-width="1"/><path d="M427.5 99 H437 M429.5 97.5 L427.5 99 L429.5 100.5 M435 97.5 L437 99 L435 100.5" fill="none" stroke="#b4b4b4" stroke-width="0.9"/><path d="M527 99.6 H531 L529 101.6 Z" fill="#444"/><path d="M646.5 71.5 H650 L648.25 73.2 Z" fill="#c8c8c8"/><rect x="612.5" y="91" width="1" height="17" fill="#dcdcdc"/><path d="M563.3 99.5 H566.8" stroke="#c0c0c0" stroke-width="1"/><text x="623" y="98.3" font-family="Liberation Sans" font-size="7.8" fill="#b5b5b5">.0</text><text x="621.2" y="104.8" font-family="Liberation Sans" font-size="7.8" fill="#b5b5b5">.00</text><path d="M619.8 95.5 H623.3 M621.3 93.8 L619.6 95.5 L621.3 97.2" fill="none" stroke="#b5b5b5" stroke-width="0.9"/><text x="640" y="98.3" font-family="Liberation Sans" font-size="7.8" fill="#b5b5b5">.00</text><text x="643.2" y="104.8" font-family="Liberation Sans" font-size="7.8" fill="#b5b5b5">.0</text><path d="M638.2 102 H641.7 M640 100.3 L641.7 102 L640 103.7" fill="none" stroke="#b5b5b5" stroke-width="0.9"/><rect x="680.3" y="61.3" width="24" height="19.5" fill="none" stroke="#c6c6c6" stroke-width="1"/><rect x="688.3" y="61.3" width="8" height="19.5" fill="#c9c9c9"/><path d="M688.3 61.3 V80.8 M696.3 61.3 V80.8 M680.3 66.2 H704.3 M680.3 71 H704.3 M680.3 76 H704.3" stroke="#c6c6c6" stroke-width="1"/><rect x="693" y="75" width="14.5" height="10.5" fill="#f3f3f3" stroke="#b8b8b8" stroke-width="1"/><path d="M697 79 H703.5 M697 81.5 H703.5 M701.5 76.8 L699 83.8" stroke="#a8a8a8" stroke-width="0.9"/><path d="M719 108.5 H722 L720.5 110 Z" fill="#c0c0c0"/><rect x="738.3" y="60.3" width="24.5" height="20.5" fill="#dedede" stroke="#c6c6c6" stroke-width="1"/><rect x="738.8" y="60.8" width="5" height="19.5" fill="#f3f3f3"/><path d="M744 60.3 V80.8 M750.3 60.3 V80.8 M756.5 60.3 V80.8 M738.3 65.5 H762.8 M738.3 70.5 H762.8 M738.3 75.5 H762.8" stroke="#c6c6c6" stroke-width="1"/><path d="M765.5 66.5 L752 79.5" stroke="#8c8c8c" stroke-width="2.4"/><path d="M752.5 78 Q748 80 746.5 85.5 Q752 84.5 754 80 Z" fill="#8c8c8c"/><path d="M763 108.5 H766 L764.5 110 Z" fill="#c0c0c0"/><path d="M87 153.3 H90.6 L88.8 155.3 Z" fill="#666"/><circle cx="111.3" cy="150.5" r="0.8" fill="#9a9a9a"/><circle cx="111.3" cy="154" r="0.8" fill="#9a9a9a"/><circle cx="111.3" cy="157.5" r="0.8" fill="#9a9a9a"/><path d="M136.5 150.8 L147 159.5 M147 150.8 L136.5 159.5" stroke="#666" stroke-width="1.3"/><path d="M169 155.8 L173.3 159.5 L181 150.8" fill="none" stroke="#666" stroke-width="1.6"/><text x="202.8" y="159.8" font-family="Liberation Serif" font-style="italic" font-weight="bold" font-size="12.5" fill="#5a5a5a">f</text><text x="207.4" y="160.6" font-family="Liberation Serif" font-style="italic" font-weight="bold" font-size="9.5" fill="#5a5a5a">x</text><path d="M12 188.5 H23 V177.5 Z" fill="#bdbdbd"/><path d="M24 724.5 L20 727.2 L24 730 Z" fill="#b9b9b9"/><path d="M41.5 724.5 L45.5 727.2 L41.5 730 Z" fill="#b9b9b9"/><circle cx="209" cy="727.3" r="7" fill="none" stroke="#777" stroke-width="1.1"/><path d="M205 727.3 H213 M209 723.3 V731.3" stroke="#777" stroke-width="1.2"/></svg>
</body></html>
